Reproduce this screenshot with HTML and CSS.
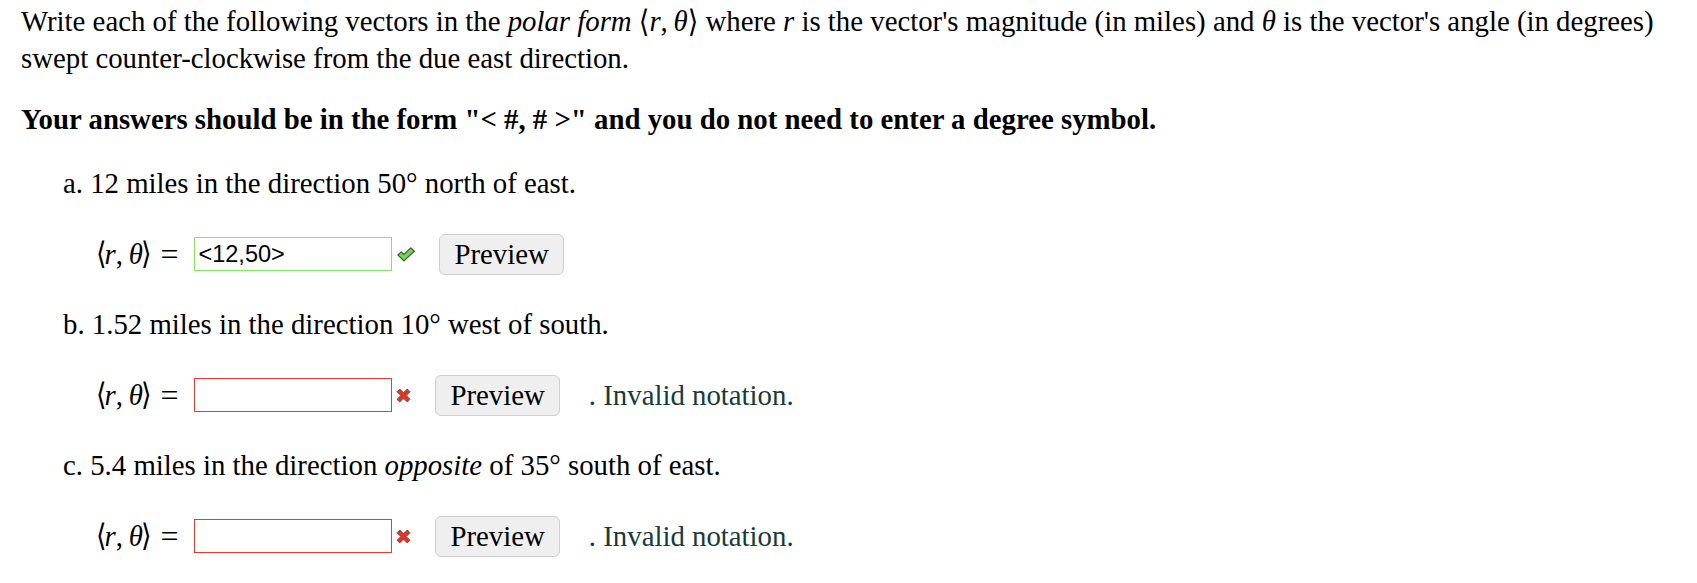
FILE: index.html
```html
<!DOCTYPE html>
<html lang="en">
<head>
<meta charset="utf-8">
<title>Polar form vectors</title>
<link rel="stylesheet" href="styles.css">
</head>
<body>
<div class="page">
  <p class="intro">Write each of the following vectors in the <i>polar form</i> <span class="mi"><span class="br">⟨</span><i>r</i>,&#8201;<i>θ</i><span class="br">⟩</span></span> where <i class="mi">r</i> is the vector's magnitude (in miles) and <i class="mi">θ</i> is the vector's angle (in degrees) swept counter-clockwise from the due east direction.</p>
  <p class="note"><b>Your answers should be in the form "&lt; #, # &gt;" and you do not need to enter a degree symbol.</b></p>
  <div class="parts">
    <div class="part">
      <p class="q">a. 12 miles in the direction 50° north of east.</p>
      <div class="answer-row">
        <span class="math"><span class="br">⟨</span><i>r</i>,&#8201;<i>θ</i><span class="br">⟩</span><span class="eq">=</span></span>
        <input class="ans ok" type="text" value="&lt;12,50&gt;">
        <svg class="icon icon-ok" width="20" height="15" viewBox="0 0 18 14"><path d="M1.5 7.5 L4.5 4.5 L7 7 L13.5 0.8 L16.8 4 L7 13 Z" fill="#6fd94f" stroke="#3f5a34" stroke-width="1.1" stroke-linejoin="round"/></svg>
        <button class="preview">Preview</button>
      </div>
    </div>
    <div class="part">
      <p class="q">b. 1.52 miles in the direction 10° west of south.</p>
      <div class="answer-row">
        <span class="math"><span class="br">⟨</span><i>r</i>,&#8201;<i>θ</i><span class="br">⟩</span><span class="eq">=</span></span>
        <input class="ans bad" type="text" value="">
        <svg class="icon icon-bad" width="15" height="15" viewBox="0 0 14 14"><path d="M1 3.5 L3.5 1 L7 4.5 L10.5 1 L13 3.5 L9.5 7 L13 10.5 L10.5 13 L7 9.5 L3.5 13 L1 10.5 L4.5 7 Z" fill="#e3342a" stroke="#7a3a36" stroke-width="0.9" stroke-linejoin="round"/></svg>
        <button class="preview">Preview</button>
        <span class="msg">. Invalid notation.</span>
      </div>
    </div>
    <div class="part">
      <p class="q">c. 5.4 miles in the direction <i>opposite</i> of 35° south of east.</p>
      <div class="answer-row">
        <span class="math"><span class="br">⟨</span><i>r</i>,&#8201;<i>θ</i><span class="br">⟩</span><span class="eq">=</span></span>
        <input class="ans bad" type="text" value="">
        <svg class="icon icon-bad" width="15" height="15" viewBox="0 0 14 14"><path d="M1 3.5 L3.5 1 L7 4.5 L10.5 1 L13 3.5 L9.5 7 L13 10.5 L10.5 13 L7 9.5 L3.5 13 L1 10.5 L4.5 7 Z" fill="#e3342a" stroke="#7a3a36" stroke-width="0.9" stroke-linejoin="round"/></svg>
        <button class="preview">Preview</button>
        <span class="msg">. Invalid notation.</span>
      </div>
    </div>
  </div>
</div>
</body>
</html>
```
FILE: styles.css
```css
html, body {
  margin: 0;
  padding: 0;
  background: #fff;
}
body {
  font-family: "Liberation Serif", "Times New Roman", serif;
  font-size: 28.8px;
  line-height: 36px;
  color: #000;
}
.page {
  padding: 3px 20px 0 21px;
}
p {
  margin: 0;
}
.note {
  margin-top: 25px;
}
.parts {
  padding-left: 42px;
  margin-top: 28px;
}
.answer-row {
  display: flex;
  align-items: center;
  height: 46px;
  margin: 30px 0 29px 33px;
}
.br {
  font-family: "DejaVu Serif", serif;
  font-style: normal;
  display: inline-block;
  transform: scaleY(1.15);
}
.mi .br {
  font-size: 27px;
}
.math {
  font-size: 28.8px;
  display: inline-flex;
  align-items: center;
  white-space: nowrap;
}
.math .br {
  font-size: 27px;
  margin: 0 -2px;
}
.math .br:first-child {
  margin-left: 0;
}
.math .eq {
  font-size: 32px;
  margin-left: 11px;
}
.ans {
  box-sizing: border-box;
  width: 198px;
  height: 34px;
  margin: 0 0 0 16px;
  padding: 0 3px;
  font-family: "Liberation Sans", Arial, sans-serif;
  font-size: 23.5px;
  color: #000;
  background: #fff;
  border: 1px solid #ccc;
  border-radius: 0;
  outline: none;
}
.ans.ok {
  border-color: #82e65e;
}
.ans.bad {
  border-color: #e23b2f;
}
.icon {
  margin-left: 4px;
  flex: none;
}
.preview {
  box-sizing: border-box;
  height: 41px;
  margin-left: 24px;
  padding: 0 14px;
  font-family: "Liberation Serif", "Times New Roman", serif;
  font-size: 28.8px;
  color: #000;
  background: #efefef;
  border: 1px solid #cfcfcf;
  border-radius: 6px;
}
.icon-ok + .preview {
  margin-left: 23px;
}
.msg {
  margin-left: 29px;
  color: #173b3b;
}
```
